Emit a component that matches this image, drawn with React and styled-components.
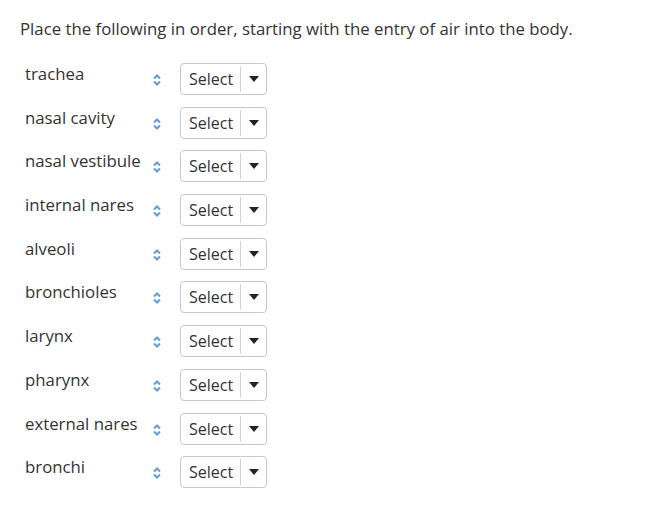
import React from 'react';
import styled, { createGlobalStyle } from 'styled-components';

const GlobalStyle = createGlobalStyle`
  body {
    margin: 0;
    background: #fff;
    font-family: "Open Sans", "Liberation Sans", sans-serif;
    color: #333;
  }
`;

const StyledPage = styled.div`
  padding: 18px 20px 20px;
`;

const StyledPrompt = styled.p`
  margin: 0 0 23px;
  font-size: 16.8px;
  line-height: 22px;
`;

const StyledList = styled.div`
  display: flex;
  flex-direction: column;
  gap: 11.7px;
  padding-left: 5px;
`;

const StyledRow = styled.div`
  display: flex;
  align-items: flex-start;
`;

const StyledLabel = styled.span`
  width: 125px;
  font-size: 16.8px;
  line-height: 22px;
`;

const StyledHandle = styled.span`
  display: flex;
  align-items: center;
  justify-content: center;
  width: 14px;
  height: 34px;
  margin-bottom: -2px;
  margin-right: 16px;
  color: #5d9ee0;
`;

const StyledSelect = styled.div`
  display: flex;
  align-items: center;
  box-sizing: border-box;
  width: 87px;
  height: 32px;
  border: 1px solid #c8c8c8;
  border-radius: 4px;
  background: #fff;
`;

const StyledValue = styled.span`
  flex: 1;
  padding-left: 8px;
  font-size: 16px;
  line-height: 22px;
`;

const StyledCaret = styled.span`
  display: flex;
  align-items: center;
  justify-content: center;
  width: 25px;
  height: 26px;
  border-left: 1px solid #d0d0d0;
`;

const items = [
  'trachea',
  'nasal cavity',
  'nasal vestibule',
  'internal nares',
  'alveoli',
  'bronchioles',
  'larynx',
  'pharynx',
  'external nares',
  'bronchi',
];

const SortIcon = () => (
  <svg width="8" height="12" viewBox="0 0 8 12">
    <path d="M1 4.5 L4 1.5 L7 4.5" fill="none" stroke="currentColor" strokeWidth="2" />
    <path d="M1 7.5 L4 10.5 L7 7.5" fill="none" stroke="currentColor" strokeWidth="2" />
  </svg>
);

const App = () => (
  <StyledPage>
    <GlobalStyle />
    <StyledPrompt>Place the following in order, starting with the entry of air into the body.</StyledPrompt>
    <StyledList>
      {items.map((item) => (
        <StyledRow key={item}>
          <StyledLabel>{item}</StyledLabel>
          <StyledHandle><SortIcon /></StyledHandle>
          <StyledSelect>
            <StyledValue>Select</StyledValue>
            <StyledCaret>
              <svg width="10" height="6" viewBox="0 0 10 6">
                <path d="M0 0 H10 L5 6 Z" fill="#222" />
              </svg>
            </StyledCaret>
          </StyledSelect>
        </StyledRow>
      ))}
    </StyledList>
  </StyledPage>
);

export default App;
